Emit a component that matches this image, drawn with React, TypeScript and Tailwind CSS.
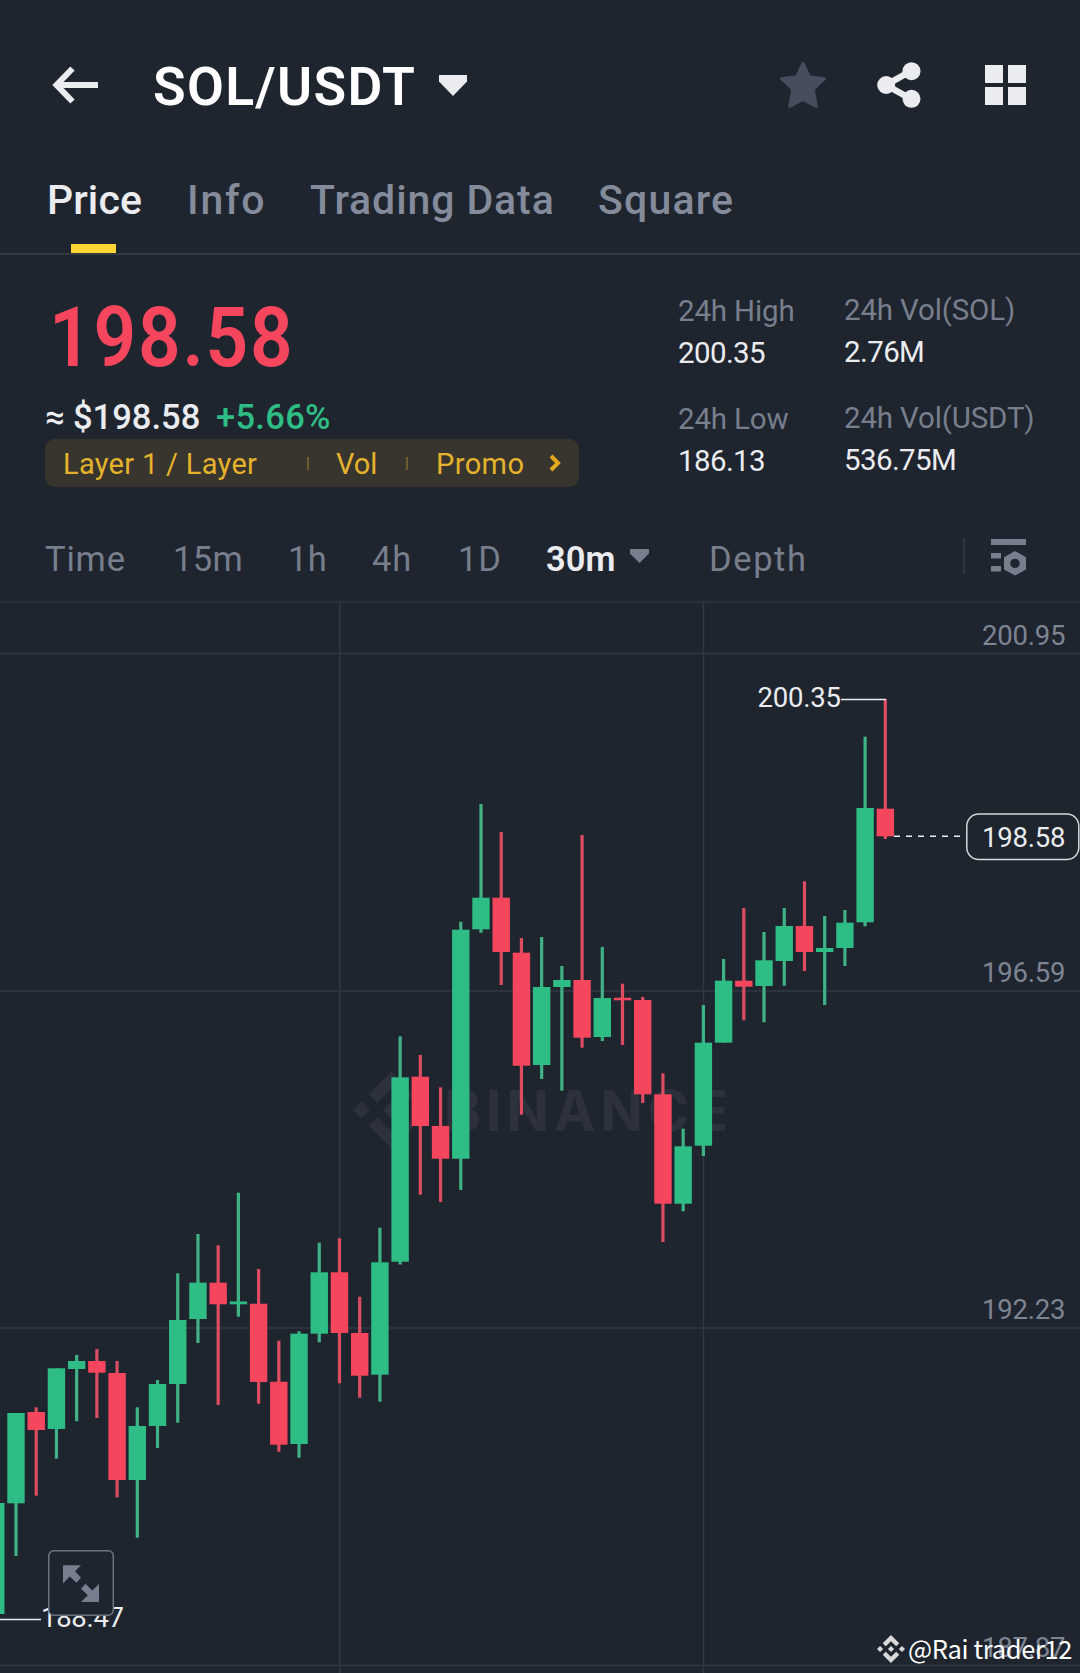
import clsx from 'clsx'

interface Candle {
  up: boolean
  high: number
  top: number
  bottom: number
  low: number
}

const tabs = [
  { label: 'Price', width: 'w-[140px]', spacing: 'tracking-[0.1px]' },
  { label: 'Info', width: 'w-[123px]', spacing: 'tracking-[1.8px]' },
  { label: 'Trading Data', width: 'w-[288px]', spacing: 'tracking-[0.9px]' },
  { label: 'Square', width: 'w-[140px]', spacing: 'tracking-[1.2px]' },
]

const intervals = [
  { label: 'Time', width: 'w-[128px]', spacing: 'tracking-[0.8px]' },
  { label: '15m', width: 'w-[115px]', spacing: 'tracking-[0.3px]' },
  { label: '1h', width: 'w-[84px]', spacing: 'tracking-[0.3px]' },
  { label: '4h', width: 'w-[86px]', spacing: 'tracking-[0.8px]' },
  { label: '1D', width: 'w-[88px]', spacing: 'tracking-[0.8px]' },
]

const statColumns = [
  [
    { label: '24h High', value: '200.35' },
    { label: '24h Low', value: '186.13' },
  ],
  [
    { label: '24h Vol(SOL)', value: '2.76M' },
    { label: '24h Vol(USDT)', value: '536.75M' },
  ],
]

const CHART_TOP = 603
const STEP = 20.217
const FIRST_X = 16

const c = (dir: 'G' | 'R', high: number, top: number, bottom: number, low: number): Candle => ({
  up: dir === 'G',
  high,
  top,
  bottom,
  low,
})

const candles: Candle[] = [
  c('G', 1503, 1503, 1614, 1614),
  c('G', 1413, 1413, 1503.3, 1556),
  c('R', 1407.3, 1412, 1430, 1495.7),
  c('G', 1368.3, 1368.3, 1429, 1458.7),
  c('G', 1355, 1361, 1369, 1421.3),
  c('R', 1349, 1361, 1372.7, 1418),
  c('R', 1361, 1373, 1480, 1497.3),
  c('G', 1407.3, 1426, 1480, 1537.7),
  c('G', 1380, 1384, 1426, 1448),
  c('G', 1273.3, 1320, 1384, 1422.7),
  c('G', 1234, 1282.7, 1319, 1343),
  c('R', 1245.3, 1282.7, 1304.3, 1405),
  c('G', 1192.7, 1301.5, 1304.3, 1316.7),
  c('R', 1269, 1303.7, 1382, 1403.7),
  c('R', 1340.7, 1381.7, 1444.7, 1451.7),
  c('G', 1331.3, 1333.7, 1444, 1457.7),
  c('G', 1242.7, 1272.3, 1333.7, 1342.3),
  c('R', 1238.3, 1272.3, 1333, 1383.3),
  c('R', 1296.7, 1333, 1375.7, 1397.7),
  c('G', 1227.7, 1262.3, 1374.7, 1401.7),
  c('G', 1036.3, 1077.3, 1261.7, 1264.5),
  c('R', 1055, 1076.7, 1126, 1194.7),
  c('R', 1087.3, 1126, 1158.7, 1202),
  c('G', 921.7, 929.7, 1158.7, 1190),
  c('G', 804, 897.7, 929.3, 932.7),
  c('R', 832, 897.7, 952, 985),
  c('R', 938, 952.7, 1065.7, 1114.7),
  c('G', 937, 987, 1065, 1079),
  c('G', 966, 980, 987, 1090.7),
  c('R', 835, 980, 1037.7, 1047.7),
  c('G', 947, 998, 1037, 1041),
  c('R', 983.7, 997.7, 1000.3, 1045),
  c('R', 997, 1000, 1094.3, 1103),
  c('R', 1073.3, 1094.3, 1203.7, 1242),
  c('G', 1128.7, 1146.3, 1203.7, 1211.3),
  c('G', 1005, 1042.7, 1145.7, 1156),
  c('G', 959, 980.7, 1042.7, 1042.7),
  c('R', 908, 980.7, 986.7, 1020.3),
  c('G', 932, 960.3, 986, 1022.3),
  c('G', 908, 926, 961, 985.7),
  c('R', 881.3, 926, 952, 971),
  c('G', 916, 948, 952, 1005),
  c('G', 910, 922.7, 948, 966),
  c('G', 736.7, 808, 922.3, 926.3),
  c('R', 699, 808.7, 836.3, 839),
]

const gridLines = [
  { y: 653.5, label: '200.95', base: 645 },
  { y: 991, label: '196.59', base: 982 },
  { y: 1328, label: '192.23', base: 1319 },
  { y: 1665.5, label: '187.87', base: 1657 },
]

const BinanceMark = () => (
  <>
    <path d="M50 0 79.5 29.5 68.5 40.5 50 22 31.5 40.5 20.5 29.5Z" />
    <path d="M50 100 79.5 70.5 68.5 59.5 50 78 31.5 59.5 20.5 70.5Z" />
    <path d="M11 39 22 50 11 61 0 50Z" />
    <path d="M89 39 100 50 89 61 78 50Z" />
    <path d="M50 39 61 50 50 61 39 50Z" />
  </>
)

function Header() {
  return (
    <header className="flex h-[171px] items-center pb-[2px] pl-[52px] pr-[54px]">
      <svg width="46" height="38" viewBox="0 0 46 38" fill="none" stroke="#eaecef" strokeWidth="6">
        <path d="M46 19H6M20.500 2.500 4.500 19l16 16.500" />
      </svg>
      <h1 className="ml-[55px] mt-[5px] w-[286px] whitespace-nowrap text-[53.500px] font-semibold leading-none tracking-[1.3px] text-white">
        SOL/USDT
      </h1>
      <svg className="mt-[2px]" width="28" height="21" viewBox="0 0 28 21" fill="#eaecef">
        <path d="M0 0h28v6.500L14 21 0 6.500z" />
      </svg>
      <svg className="ml-auto" width="46" height="47" viewBox="0 0 46 47" fill="#474d5c" stroke="#474d5c" strokeWidth="3" strokeLinejoin="round">
        <path d="M23 2.500l6.200 13.200 15.300 2-11.200 10.500 3 17.300L23 38.500 9.700 45.500l3-17.300L1.500 17.700l15.300-2z" />
      </svg>
      <svg className="ml-[51px]" width="44" height="46" viewBox="0 0 44 46" fill="#eaecef">
        <path d="M34 9 9 23l25 14" fill="none" stroke="#eaecef" strokeWidth="6.500" />
        <circle cx="34.500" cy="9.200" r="9" />
        <circle cx="9.200" cy="23" r="9" />
        <circle cx="34.500" cy="36.800" r="9" />
      </svg>
      <div className="ml-[64px] grid grid-cols-2 gap-x-[5px] gap-y-1">
        {[0, 1, 2, 3].map((i) => (
          <div key={i} className="size-[18px] bg-[#eaecef]" />
        ))}
      </div>
    </header>
  )
}

function Tabs() {
  return (
    <nav className="flex h-[84px] border-b-2 border-[#333942] pl-[47px]">
      {tabs.map((tab, i) => (
        <div key={tab.label} className={tab.width}>
          <div
            className={clsx(
              'flex h-[57px] items-center whitespace-nowrap pt-[2px] text-[41px] font-medium',
              tab.spacing,
              i === 0 ? 'text-[#eaecef]' : 'text-[#848b9a]',
            )}
          >
            {tab.label}
          </div>
          {i === 0 && <div className="ml-[24px] mt-4 h-[9px] w-[45px] bg-[#fcd535]" />}
        </div>
      ))}
    </nav>
  )
}

function Summary() {
  return (
    <section className="flex h-[263px] pl-[45px]">
      <div className="w-[633px] pt-[30px]">
        <div className="flex h-[101px] items-center pt-[4px] text-[83px] font-semibold leading-none text-[#f6465d]">
          <span className="ml-[4px] origin-left scale-x-[0.9] tracking-[2px]">198.58</span>
        </div>
        <div className="flex h-[53px] items-center whitespace-nowrap pt-[10px] text-[34.500px] font-medium leading-none">
          <span className="w-[28px] text-[#eaecef]">≈</span>
          <span className="w-[143px] text-[#eaecef]">$198.58</span>
          <span className="tracking-[0.3px] text-[#2ebd85]">+5.66%</span>
        </div>
        <div className="flex h-12 w-[534px] items-center whitespace-nowrap rounded-[10px] bg-[#37352d] pl-[18px] text-[29px] leading-none text-[#e5b22c]">
          <span className="w-[244px] pt-[2px] tracking-[0.3px]">Layer 1 / Layer</span>
          <span className="h-[13px] w-[2px] bg-[#6f5a2b]" />
          <span className="ml-[27px] w-[70px] pt-[2px]">Vol</span>
          <span className="h-[13px] w-[2px] bg-[#6f5a2b]" />
          <span className="ml-[28px] w-[113px] pt-[2px] tracking-[0.4px]">Promo</span>
          <svg width="12" height="18" viewBox="0 0 12 18" fill="none" stroke="#e5a91f" strokeWidth="4">
            <path d="M2 2l7 7-7 7" />
          </svg>
        </div>
      </div>
      {statColumns.map((column, i) => (
        <div key={i} className={clsx('flex flex-col gap-6', i === 0 ? 'w-[166px] pt-[35px]' : 'pt-[34px]')}>
          {column.map((stat) => (
            <div key={stat.label} className="whitespace-nowrap text-[29.500px]">
              <div className="h-[42px] leading-[42px] tracking-[-0.15px] text-[#777e8c]">{stat.label}</div>
              <div className="h-[42px] leading-[42px] tracking-[-0.6px] text-[#eaecef]">{stat.value}</div>
            </div>
          ))}
        </div>
      ))}
    </section>
  )
}

function IntervalBar() {
  return (
    <div className="flex h-[85px] items-center whitespace-nowrap border-b-2 border-[#2b313b] pl-[45px] text-[34.500px] text-[#777e8c]">
      {intervals.map((item) => (
        <span key={item.label} className={clsx('pt-px', item.width, item.spacing)}>
          {item.label}
        </span>
      ))}
      <span className="w-[84px] font-semibold text-[#eaecef]">30m</span>
      <svg className="-mt-2" width="19" height="14" viewBox="0 0 19 14" fill="#777e8c">
        <path d="M0 0h19v4.500L9.500 14 0 4.500z" />
      </svg>
      <span className="ml-[60px] pt-px tracking-[1.600px]">Depth</span>
      <div className="-mt-[7px] ml-auto h-9 w-[2px] bg-[#2f3641]" />
      <svg className="-mt-[5px] ml-[26px] mr-[54px]" width="35" height="37" viewBox="0 0 35 37" fill="#777e8c">
        <path d="M0 0h35v6H0zM0 14h10v5.500H0zM0 27h10v5.500H0z" />
        <path fillRule="evenodd" d="M24 12l11 6.200v12.200l-11 6.200-11-6.200V18.200zM24 19.700a4.700 4.700 0 1 0 0 9.400 4.700 4.700 0 0 0 0-9.400z" />
      </svg>
    </div>
  )
}

function Chart() {
  return (
    <div className="relative h-[1070px] overflow-hidden">
      <svg className="block" width="1080" height="1070" viewBox={`0 ${CHART_TOP} 1080 1070`} fontFamily="Roboto, sans-serif" fontSize="27.5">
        <g fill="#2d313b">
          <g transform="translate(353 1071.500) scale(.77)">
            <BinanceMark />
          </g>
          <text x="444" y="1131" fontFamily="Inter, sans-serif" fontSize="56" fontWeight="700" textLength="284">
            BINANCE
          </text>
        </g>

        <g stroke="#323843" strokeWidth="1.500">
          {gridLines.map((line) => (
            <path key={line.label} d={`M0 ${line.y}H1080`} />
          ))}
          <path d="M339.700 603V1673M703.500 603V1673" />
        </g>

        {candles.map((candle, i) => {
          const x = FIRST_X + (i - 1) * STEP
          return (
            <g key={i}>
              <rect x={x - 1.6} y={candle.high} width="3.2" height={candle.low - candle.high} fill={candle.up ? '#3fb386' : '#dd4d62'} />
              <rect x={x - 8.7} y={candle.top} width="17.4" height={candle.bottom - candle.top} fill={candle.up ? '#2ebd85' : '#f6465d'} />
            </g>
          )
        })}

        {gridLines.map((line) => (
          <text key={line.label} x="982" y={line.base} textLength="83.5" fill="#7d8492">
            {line.label}
          </text>
        ))}

        {/* session high and low */}
        <path d="M841 699.500H886M0 1619.500H41" stroke="#eaecef" strokeWidth="1.500" />
        <text x="757.5" y="707" textLength="83.5" fill="#eaecef">200.35</text>
        <text x="41" y="1626.700" textLength="83" fill="#eaecef">188.47</text>

        {/* last price */}
        <path d="M894 836.300H960" stroke="#eaecef" strokeWidth="1.500" strokeDasharray="6 6" />
        <rect x="966.800" y="814" width="112" height="45.500" rx="12" fill="#1f252f" stroke="#d5d8dd" strokeWidth="1.500" />
        <text x="982" y="847" textLength="83.5" fill="#eaecef">198.58</text>

        {/* fullscreen toggle */}
        <rect x="48.800" y="1550.800" width="64.500" height="64.500" rx="5" fill="#1f252f" stroke="#6d7585" strokeWidth="1.500" />
        <g fill="#777f8f">
          <path d="M63 1565.300H81L75 1571.300 81 1577.500 76.500 1582.800 69.800 1576.600 63 1583.500Z" />
          <path d="M99 1602H81L87.800 1595.300 81 1588.700 85.500 1583.800 92.300 1590.500 99 1584Z" />
        </g>
      </svg>

      <div className="absolute bottom-[8px] right-[7px] flex h-8 items-center gap-[3px]">
        <svg width="28" height="28" viewBox="0 0 100 100" fill="#d9d9d9">
          <BinanceMark />
        </svg>
        <span className="-mt-[3px] w-[165px] whitespace-nowrap font-['Noto_Sans_CJK_SC',sans-serif] text-[25.500px] leading-none tracking-[-0.35px] text-white">
          @Rai trader12
        </span>
      </div>
    </div>
  )
}

export default function App() {
  return (
    <main className="h-[1673px] w-[1080px] overflow-hidden bg-[#1f252f] font-[Roboto,sans-serif]">
      <Header />
      <Tabs />
      <Summary />
      <IntervalBar />
      <Chart />
    </main>
  )
}
